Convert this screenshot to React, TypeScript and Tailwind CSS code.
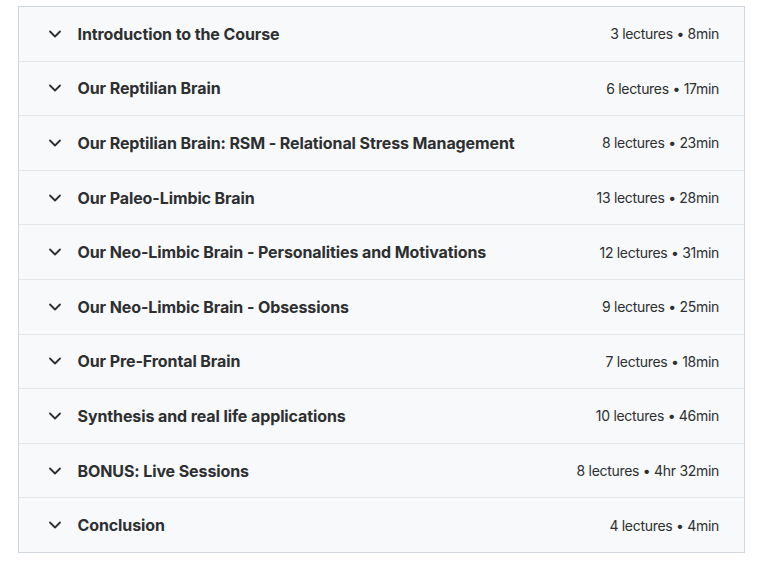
import { ChevronDown } from 'lucide-react'

const sections = [
  { title: 'Introduction to the Course', meta: '3 lectures • 8min' },
  { title: 'Our Reptilian Brain', meta: '6 lectures • 17min' },
  { title: 'Our Reptilian Brain: RSM - Relational Stress Management', meta: '8 lectures • 23min' },
  { title: 'Our Paleo-Limbic Brain', meta: '13 lectures • 28min' },
  { title: 'Our Neo-Limbic Brain - Personalities and Motivations', meta: '12 lectures • 31min' },
  { title: 'Our Neo-Limbic Brain - Obsessions', meta: '9 lectures • 25min' },
  { title: 'Our Pre-Frontal Brain', meta: '7 lectures • 18min' },
  { title: 'Synthesis and real life applications', meta: '10 lectures • 46min' },
  { title: 'BONUS: Live Sessions', meta: '8 lectures • 4hr 32min' },
  { title: 'Conclusion', meta: '4 lectures • 4min' },
]

export default function App() {
  return (
    <div className="h-[574px] w-[768px] bg-white pl-[18px] pt-[6px] font-['Inter',sans-serif]">
      <div className="w-[727px] border border-[#d1d7dc]">
        {sections.map((s, i) => (
          <div
            key={s.title}
            className={`flex items-center bg-[#f7f9fa] pl-[26px] pr-[25px] ${
              i > 0 ? 'h-[54.6px] border-t border-[#e4e8eb]' : 'h-[53.6px]'
            }`}
          >
            <ChevronDown className="h-[20px] w-[20px] text-[#2d2f31]" strokeWidth={2.2} />
            <span className="ml-[12.5px] flex-1 text-[16px] font-bold tracking-[-0.1px] text-[#2d2f31]">
              {s.title}
            </span>
            <span className="text-[14px] tracking-[-0.3px] text-[#2d2f31]">{s.meta}</span>
          </div>
        ))}
      </div>
    </div>
  )
}
